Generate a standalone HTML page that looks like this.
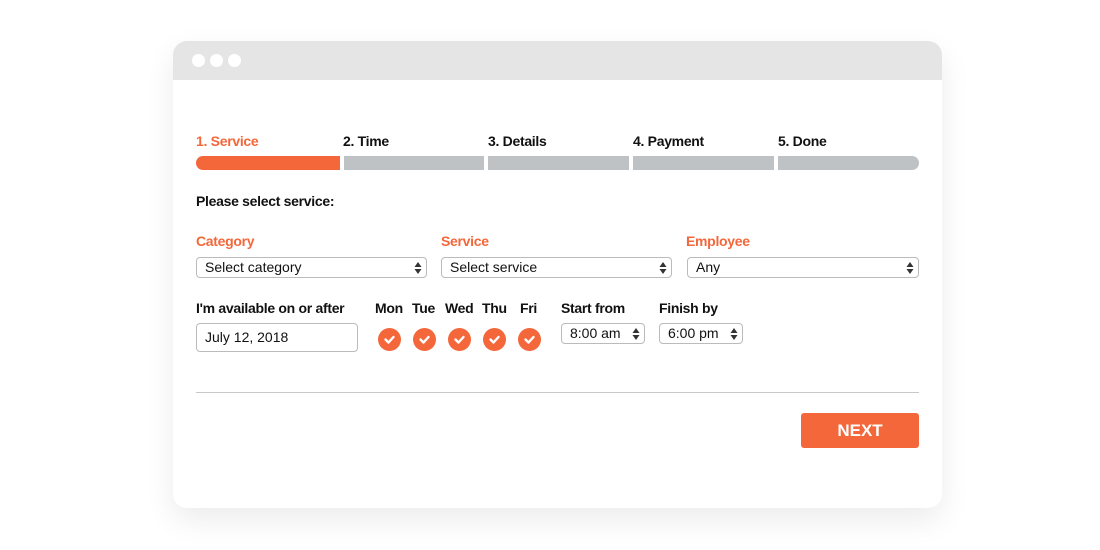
<!DOCTYPE html>
<html><head><meta charset="utf-8"><style>
*{margin:0;padding:0;box-sizing:border-box}
body{width:1100px;height:550px;background:#fff;position:relative;overflow:hidden;font-family:"Liberation Sans",Arial,sans-serif;color:#111}
.card{position:absolute;left:173px;top:41px;width:769px;height:467px;border-radius:14px;background:#fff;box-shadow:0 12px 30px rgba(0,0,0,0.08);overflow:hidden}
.hdr{position:absolute;left:0;top:0;width:100%;height:39px;background:#e5e5e5}
.dot{position:absolute;top:13px;width:13px;height:13px;border-radius:50%;background:#fff}
.a{position:absolute}
.b{font-weight:bold;font-size:14px;white-space:nowrap;letter-spacing:-0.3px}
.o{color:#f4673a}
.bar{position:absolute;top:156px;height:14px;background:#bec2c5}
.sel{position:absolute;height:21px;border:1px solid #bbb;border-radius:4px;font-size:14px;line-height:19px;padding-left:8px;color:#111;background:#fff}
.arr{position:absolute;right:4px;top:3px;width:8px;height:14px}
.chk{position:absolute;top:328px;width:23px;height:23px;border-radius:50%;background:#f4673a}
</style></head><body>
<div class="card">
<div class="hdr"></div>
<div class="dot" style="left:19px"></div><div class="dot" style="left:37px"></div><div class="dot" style="left:55px"></div>
</div>
<div class="a b o" style="left:196px;top:133px">1. Service</div>
<div class="a b" style="left:343px;top:133px">2. Time</div>
<div class="a b" style="left:488px;top:133px">3. Details</div>
<div class="a b" style="left:633px;top:133px">4. Payment</div>
<div class="a b" style="left:778px;top:133px">5. Done</div>
<div class="bar" style="left:196px;width:144px;background:#f4673a;border-radius:7px 0 0 7px"></div>
<div class="bar" style="left:344px;width:140px"></div>
<div class="bar" style="left:488px;width:141px"></div>
<div class="bar" style="left:633px;width:141px"></div>
<div class="bar" style="left:778px;width:141px;border-radius:0 7px 7px 0"></div>
<div class="a b" style="left:196px;top:193px">Please select service:</div>
<div class="a b o" style="left:196px;top:233px">Category</div>
<div class="a b o" style="left:441px;top:233px">Service</div>
<div class="a b o" style="left:686px;top:233px">Employee</div>
<div class="sel" style="left:196px;top:257px;width:231px">Select category<svg class="arr" viewBox="0 0 8 14"><path d="M0.5 6L4 1L7.5 6ZM0.5 8L4 13L7.5 8Z" fill="#333"/></svg></div>
<div class="sel" style="left:441px;top:257px;width:231px">Select service<svg class="arr" viewBox="0 0 8 14"><path d="M0.5 6L4 1L7.5 6ZM0.5 8L4 13L7.5 8Z" fill="#333"/></svg></div>
<div class="sel" style="left:687px;top:257px;width:232px">Any<svg class="arr" viewBox="0 0 8 14"><path d="M0.5 6L4 1L7.5 6ZM0.5 8L4 13L7.5 8Z" fill="#333"/></svg></div>
<div class="a b" style="left:196px;top:300px">I'm available on or after</div>
<div class="a b" style="left:375px;top:300px">Mon</div>
<div class="a b" style="left:412px;top:300px">Tue</div>
<div class="a b" style="left:445px;top:300px">Wed</div>
<div class="a b" style="left:482px;top:300px">Thu</div>
<div class="a b" style="left:520px;top:300px">Fri</div>
<div class="a b" style="left:561px;top:300px">Start from</div>
<div class="a b" style="left:659px;top:300px">Finish by</div>
<div class="sel" style="left:196px;top:323px;width:162px;height:29px;line-height:27px">July 12, 2018</div>
<div class="chk" style="left:378px"></div><div class="chk" style="left:413px"></div><div class="chk" style="left:448px"></div><div class="chk" style="left:483px"></div><div class="chk" style="left:518px"></div>
<svg class="a" style="left:0;top:0" width="1100" height="550"><g fill="none" stroke="#fff" stroke-width="2.4" stroke-linecap="round" stroke-linejoin="round">
<path d="M385.5 339.5l3 3l5-5.5"/><path d="M420.5 339.5l3 3l5-5.5"/><path d="M455.5 339.5l3 3l5-5.5"/><path d="M490.5 339.5l3 3l5-5.5"/><path d="M525.5 339.5l3 3l5-5.5"/></g></svg>
<div class="sel" style="left:561px;top:323px;width:84px">8:00 am<svg class="arr" viewBox="0 0 8 14"><path d="M0.5 6L4 1L7.5 6ZM0.5 8L4 13L7.5 8Z" fill="#333"/></svg></div>
<div class="sel" style="left:659px;top:323px;width:84px">6:00 pm<svg class="arr" viewBox="0 0 8 14"><path d="M0.5 6L4 1L7.5 6ZM0.5 8L4 13L7.5 8Z" fill="#333"/></svg></div>
<div class="a" style="left:196px;top:392px;width:723px;height:1px;background:#c8c8c8"></div>
<div class="a" style="left:801px;top:413px;width:118px;height:35px;background:#f4673a;border-radius:3px;color:#fff;font-weight:bold;font-size:17px;text-align:center;line-height:35px">NEXT</div>
</body></html>
